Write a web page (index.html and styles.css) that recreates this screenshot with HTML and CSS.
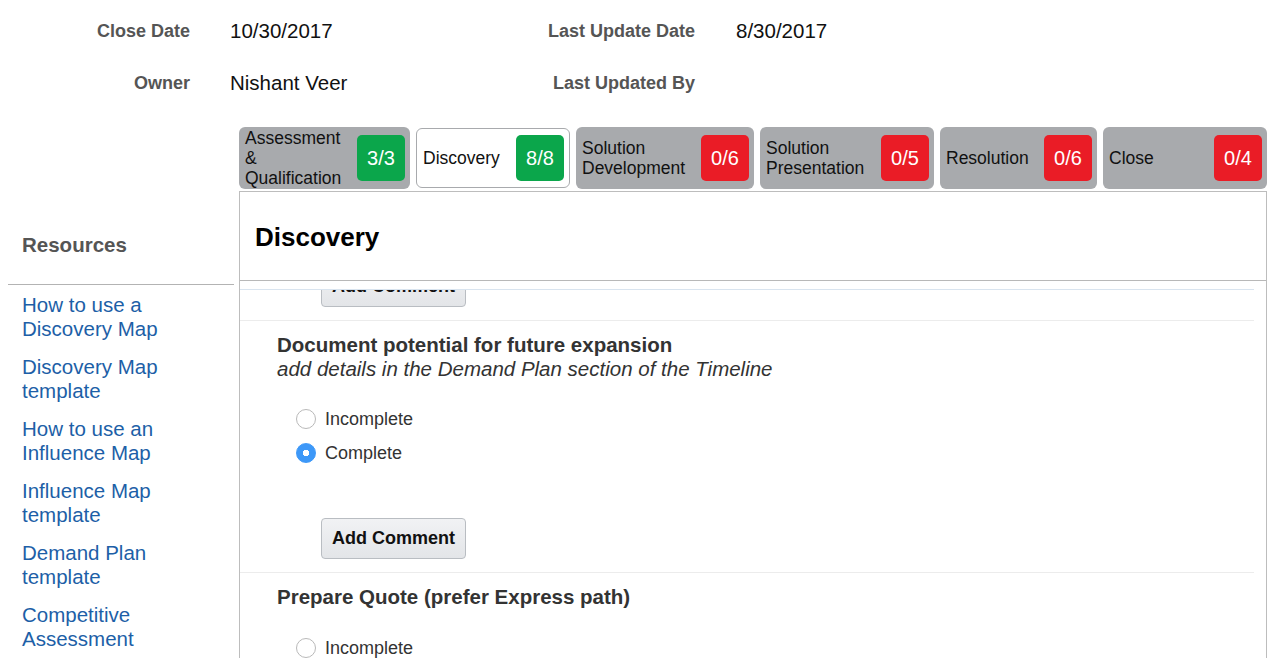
FILE: index.html
```html
<!DOCTYPE html>
<html>
<head>
<meta charset="utf-8">
<link rel="stylesheet" href="styles.css">
</head>
<body>
<div class="info">
  <div class="lbl">Close Date</div>
  <div class="val">10/30/2017</div>
  <div class="lbl lbl2">Last Update Date</div>
  <div class="val">8/30/2017</div>
  <div class="lbl">Owner</div>
  <div class="val">Nishant Veer</div>
  <div class="lbl lbl2">Last Updated By</div>
  <div class="val"></div>
</div>
<div class="main">
  <aside class="sidebar">
    <h3 class="res-title">Resources</h3>
    <a class="res-link" href="#">How to use a<br>Discovery Map</a>
    <a class="res-link" href="#">Discovery Map<br>template</a>
    <a class="res-link" href="#">How to use an<br>Influence Map</a>
    <a class="res-link" href="#">Influence Map<br>template</a>
    <a class="res-link" href="#">Demand Plan<br>template</a>
    <a class="res-link" href="#">Competitive<br>Assessment</a>
  </aside>
  <section class="content">
    <div class="tabs">
      <div class="tab"><span class="tab-text">Assessment<br>&amp;<br>Qualification</span><span class="badge ok">3/3</span></div>
      <div class="tab active"><span class="tab-text">Discovery</span><span class="badge ok">8/8</span></div>
      <div class="tab"><span class="tab-text">Solution<br>Development</span><span class="badge bad">0/6</span></div>
      <div class="tab"><span class="tab-text">Solution<br>Presentation</span><span class="badge bad">0/5</span></div>
      <div class="tab"><span class="tab-text">Resolution</span><span class="badge bad">0/6</span></div>
      <div class="tab"><span class="tab-text">Close</span><span class="badge bad">0/4</span></div>
    </div>
    <div class="panel">
      <div class="panel-head"><h2>Discovery</h2></div>
      <div class="scroll">
        <div class="item item-partial">
          <button class="btn">Add Comment</button>
        </div>
        <div class="item">
          <div class="item-title">Document potential for future expansion</div>
          <div class="item-sub">add details in the Demand Plan section of the Timeline</div>
          <div class="radios">
            <label class="radio-row"><input type="radio" name="r1"> Incomplete</label>
            <label class="radio-row"><input type="radio" name="r1" checked> Complete</label>
          </div>
          <button class="btn">Add Comment</button>
        </div>
        <div class="item">
          <div class="item-title">Prepare Quote (prefer Express path)</div>
          <div class="radios">
            <label class="radio-row"><input type="radio" name="r2"> Incomplete</label>
            <label class="radio-row"><input type="radio" name="r2"> Complete</label>
          </div>
          <button class="btn">Add Comment</button>
        </div>
      </div>
    </div>
  </section>
</div>
</body>
</html>
```
FILE: styles.css
```css
html, body {
  margin: 0;
  height: 658px;
  overflow: hidden;
  background: #fff;
  font-family: "Liberation Sans", Arial, Helvetica, sans-serif;
  color: #111;
}

.info {
  display: grid;
  grid-template-columns: 230px 300px 206px 1fr;
  grid-auto-rows: 52px;
  align-items: center;
  padding-top: 5px;
}
.lbl {
  text-align: right;
  padding-right: 40px;
  font-weight: bold;
  font-size: 18px;
  color: #555;
}
.lbl2 { padding-right: 41px; }
.val {
  font-size: 20.5px;
  color: #111;
}

.main {
  display: flex;
  margin-top: 18px;
  margin-left: 8px;
}

.sidebar {
  width: 226px;
  flex: none;
  margin-right: 5px;
}
.res-title {
  margin: 0;
  padding: 106px 0 27px 14px;
  border-bottom: 1px solid #b3b3b3;
  font-size: 20.5px;
  line-height: 24px;
  color: #555;
}
.res-link {
  display: block;
  padding-left: 14px;
  font-size: 20.5px;
  line-height: 24px;
  color: #1d5fa7;
  text-decoration: none;
  margin-bottom: 14px;
}
.res-link:first-of-type { margin-top: 8px; }

.content {
  width: 1028px;
  flex: none;
}

.tabs {
  display: grid;
  grid-template-columns: 171px 154px 178px 174px 157px 164px;
  column-gap: 6px;
  height: 62px;
}
.tab {
  display: flex;
  align-items: center;
  justify-content: space-between;
  background: #a8aaad;
  border-radius: 6px;
  padding: 0 5px 0 6px;
  box-sizing: border-box;
}
.tab.active {
  background: #fff;
  border: 1px solid #a8aaad;
  margin: 1px 0;
  padding: 0 5px 0 6px;
}
.tab-text {
  font-size: 17.5px;
  line-height: 20px;
  color: #111;
}
.badge {
  width: 48px;
  height: 46px;
  border-radius: 5px;
  display: flex;
  align-items: center;
  justify-content: center;
  color: #fff;
  font-size: 20px;
  flex: none;
}
.badge.ok { background: #0ba64b; }
.badge.bad { background: #ea1c26; }

.panel {
  margin-top: 2px;
  border: 1px solid #bdbdbd;
  border-bottom: none;
  height: 480px;
  overflow: hidden;
}
.panel-head {
  border-bottom: 1px solid #b8b8b8;
  padding: 30px 15px 28px;
}
.panel-head h2 {
  margin: 0;
  font-size: 26px;
  line-height: 30px;
  color: #000;
}

.scroll {
  margin-top: 8px;
  margin-right: 12px;
  border-top: 1px solid #d9e4ef;
  overflow: hidden;
  height: 400px;
}

.item {
  padding: 12px 0 13px 37px;
  border-bottom: 1px solid #ececec;
}
.item-partial {
  padding-top: 0;
  margin-top: -24px;
}
.item-title {
  font-size: 20.5px;
  line-height: 24px;
  font-weight: bold;
  color: #333;
}
.item-sub {
  font-size: 20.5px;
  line-height: 23px;
  font-style: italic;
  color: #333;
}
.radios {
  margin-top: 22px;
  margin-bottom: 48px;
}
.radio-row {
  display: flex;
  align-items: center;
  height: 34px;
  font-size: 18px;
  color: #333;
  gap: 9px;
  padding-left: 19px;
}
.radio-row input {
  appearance: none;
  -webkit-appearance: none;
  margin: 0;
  width: 20px;
  height: 20px;
  border-radius: 50%;
  border: 1px solid #b9b9b9;
  background: #fff;
  box-sizing: border-box;
  flex: none;
}
.radio-row input:checked {
  background: radial-gradient(circle, #fff 0 3px, #3d98f8 3.5px);
  border-color: #3d98f8;
}

.btn {
  display: block;
  margin-left: 44px;
  width: 145px;
  height: 41px;
  border: 1px solid #b9bdc2;
  border-radius: 4px;
  background: linear-gradient(#f1f2f4, #e3e5e8);
  font-family: "Liberation Sans", Arial, sans-serif;
  font-weight: bold;
  font-size: 18px;
  color: #111;
  padding: 0;
}
```
